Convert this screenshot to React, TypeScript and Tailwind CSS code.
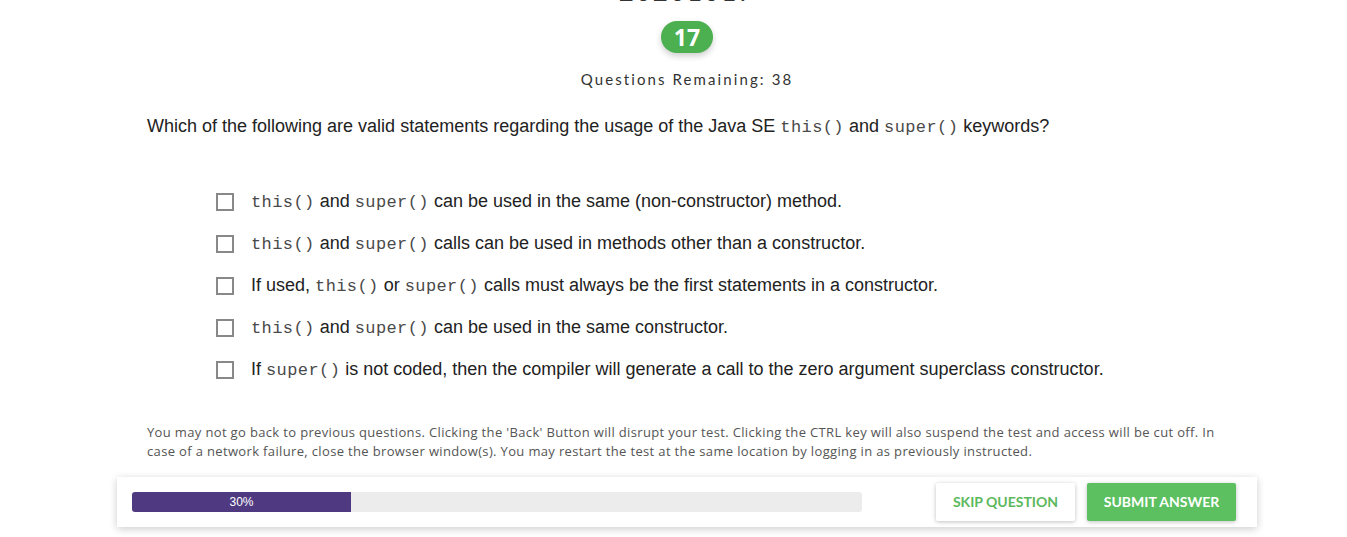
import React, { useState } from 'react';

interface Opcao {
    id: number;
    partes: { code?: boolean; text: string }[];
}

const opcoes: Opcao[] = [
    { id: 1, partes: [{ code: true, text: 'this()' }, { text: ' and ' }, { code: true, text: 'super()' }, { text: ' can be used in the same (non-constructor) method.' }] },
    { id: 2, partes: [{ code: true, text: 'this()' }, { text: ' and ' }, { code: true, text: 'super()' }, { text: ' calls can be used in methods other than a constructor.' }] },
    { id: 3, partes: [{ text: 'If used, ' }, { code: true, text: 'this()' }, { text: ' or ' }, { code: true, text: 'super()' }, { text: ' calls must always be the first statements in a constructor.' }] },
    { id: 4, partes: [{ code: true, text: 'this()' }, { text: ' and ' }, { code: true, text: 'super()' }, { text: ' can be used in the same constructor.' }] },
    { id: 5, partes: [{ text: 'If ' }, { code: true, text: 'super()' }, { text: ' is not coded, then the compiler will generate a call to the zero argument superclass constructor.' }] },
];

const Code: React.FC<{ children: React.ReactNode }> = ({ children }) => (
    <span className="font-['Liberation_Mono',monospace] text-[17px] tracking-[0.4px] text-[#4a4a4a]">{children}</span>
);

const App: React.FC = () => {
    const [marcadas, setMarcadas] = useState<number[]>([]);

    const toggle = (id: number) => {
        setMarcadas(prev => prev.includes(id) ? prev.filter(x => x !== id) : [...prev, id]);
    };

    const progresso = 30;

    return (
        <div className="w-[1347px] h-[537px] overflow-hidden bg-white">
            <div className="ml-[117px] w-[1140px] flex flex-col">
                {/* Cabeçalho (título cortado pelo scroll) */}
                <div className="flex flex-col items-center">
                    <div className="h-[8px] overflow-hidden flex items-end">
                        <h1 className="text-[26px] leading-[30px] tracking-[2px] text-[#333] font-['Lato',sans-serif] mb-[-1px] translate-y-[-3px]">20201017</h1>
                    </div>
                    <div className="mt-[13px] h-[32px] w-[52px] rounded-full bg-[#4caf50] shadow-[0_3px_6px_rgba(0,0,0,0.2)] flex items-center justify-center text-white font-bold text-[23px] font-['Open_Sans',sans-serif]">17</div>
                    <p className="mt-[15px] text-[15px] tracking-[2.1px] text-[#333] font-['Lato',sans-serif]">Questions Remaining: 38</p>
                </div>

                {/* Pergunta */}
                <p className="mt-[23px] ml-[30px] text-[18px] leading-[24px] text-[#222] font-['Liberation_Sans',sans-serif]">
                    Which of the following are valid statements regarding the usage of the Java SE <Code>this()</Code> and <Code>super()</Code> keywords?
                </p>

                <div className="mt-[50px] ml-[99px] flex flex-col gap-[18px]">
                    {opcoes.map(op => (
                        <label key={op.id} onClick={() => toggle(op.id)} className="flex items-center cursor-pointer h-[24px]">
                            <span className={`w-[18px] h-[18px] border-2 border-[#888] mr-[17px] shrink-0 ${marcadas.includes(op.id) ? 'bg-[#4caf50]' : 'bg-white'}`} />
                            <span className="text-[18px] leading-[24px] text-[#222] font-['Liberation_Sans',sans-serif]">
                                {op.partes.map((p, i) => p.code ? <Code key={i}>{p.text}</Code> : <span key={i}>{p.text}</span>)}
                            </span>
                        </label>
                    ))}
                </div>

                {/* Aviso */}
                <p className="mt-[41px] ml-[30px] mr-[16px] text-[13px] leading-[19px] tracking-[0.35px] text-[#555] font-['Open_Sans',sans-serif]">
                    You may not go back to previous questions. Clicking the 'Back' Button will disrupt your test. Clicking the CTRL key will also suspend the test and access will be cut off. In case of a network failure, close the browser window(s). You may restart the test at the same location by logging in as previously instructed.
                </p>

                {/* Barra inferior */}
                <div className="mt-[16px] h-[50px] bg-white shadow-[0_2px_8px_rgba(0,0,0,0.2)] flex items-center pl-[15px] pr-[21px]">
                    <div className="w-[730px] h-[20px] bg-[#ececec] rounded-[3px] overflow-hidden">
                        <div className="h-full bg-[#4f3a82] flex items-center justify-center text-white text-[12px] font-['Liberation_Sans',sans-serif]" style={{ width: `${progresso}%` }}>
                            {progresso}%
                        </div>
                    </div>
                    <div className="ml-auto flex gap-[12px]">
                        <button className="w-[139px] h-[38px] bg-white rounded-[2px] shadow-[0_1px_4px_rgba(0,0,0,0.25)] text-[#5cb85c] font-bold text-[14px] font-['Lato',sans-serif]">SKIP QUESTION</button>
                        <button className="w-[149px] h-[38px] bg-[#5cbf60] rounded-[2px] shadow-[0_1px_4px_rgba(0,0,0,0.25)] text-white font-bold text-[14px] font-['Lato',sans-serif]">SUBMIT ANSWER</button>
                    </div>
                </div>
            </div>
        </div>
    );
};

export default App;
